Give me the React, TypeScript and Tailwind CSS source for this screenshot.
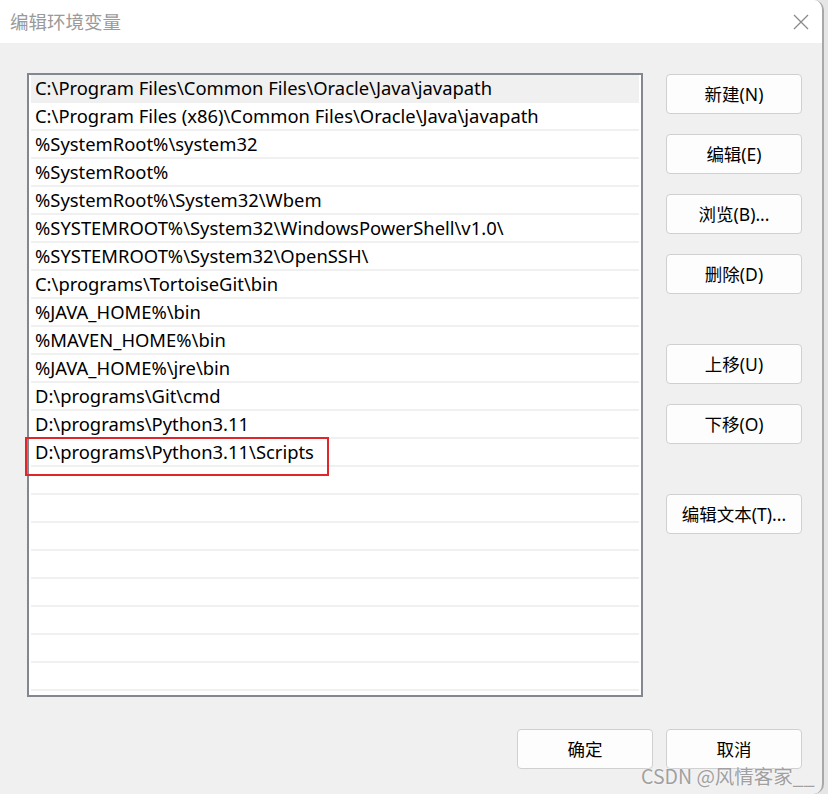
import React from "react";

const rows = [
  "C:\\Program Files\\Common Files\\Oracle\\Java\\javapath",
  "C:\\Program Files (x86)\\Common Files\\Oracle\\Java\\javapath",
  "%SystemRoot%\\system32",
  "%SystemRoot%",
  "%SystemRoot%\\System32\\Wbem",
  "%SYSTEMROOT%\\System32\\WindowsPowerShell\\v1.0\\",
  "%SYSTEMROOT%\\System32\\OpenSSH\\",
  "C:\\programs\\TortoiseGit\\bin",
  "%JAVA_HOME%\\bin",
  "%MAVEN_HOME%\\bin",
  "%JAVA_HOME%\\jre\\bin",
  "D:\\programs\\Git\\cmd",
  "D:\\programs\\Python3.11",
  "D:\\programs\\Python3.11\\Scripts",
];

const FONT = { fontFamily: '"Noto Sans", "Noto Sans CJK SC", sans-serif' };

function Btn({ label, className = "" }: { label: string; className?: string }) {
  return (
    <div
      className={
        "w-[136px] h-[40px] flex items-center justify-center rounded-[4px] border border-[#d0d0d0] bg-[#fdfdfd] text-[17.5px] text-black " +
        className
      }
    >
      {label}
    </div>
  );
}

export default function App() {
  const empty = Array.from({ length: 8 });
  return (
    <div className="w-[828px] h-[794px] bg-[#e6e6e6] overflow-hidden relative" style={FONT}>
      <div className="w-[824px] h-[794px] bg-[#f0f0f0] rounded-tr-[10px] rounded-br-[10px] border-r-2 border-[#a8a8a8] flex flex-col overflow-hidden">
        {/* title bar */}
        <div className="h-[43px] bg-white flex items-center justify-between pl-[10px] pr-[12px] shrink-0">
          <span className="text-[18.5px] text-[#9a9a9a]" style={{ fontFamily: '"Noto Sans CJK SC", sans-serif' }}>
            编辑环境变量
          </span>
          <svg width="18" height="18" viewBox="0 0 18 18">
            <path d="M2 2 L16 16 M16 2 L2 16" stroke="#8a8a8a" strokeWidth="1.3" />
          </svg>
        </div>
        {/* body */}
        <div className="flex pl-[27px] pt-[30px]">
          <div className="relative">
            <div className="w-[616px] h-[624px] border-2 border-[#828790] bg-white overflow-hidden pl-[2px] pr-[2px]">
              {rows.map((r, i) => (
                <div
                  key={i}
                  className={
                    "h-[28px] border-b-2 border-[#f0f0f0] flex items-center pl-[4px] text-[18.4px] text-black whitespace-nowrap " +
                    (i === 0 ? "bg-[#f0f0f0]" : "")
                  }
                >
                  {r}
                </div>
              ))}
              {empty.map((_, i) => (
                <div key={"e" + i} className="h-[28px] border-b-2 border-[#f0f0f0]" />
              ))}
            </div>
            <div className="absolute left-[-2px] top-[364px] w-[304px] h-[39px] border-2 border-[#e0252b]" />
          </div>
          <div className="ml-[23px] mt-[1px] flex flex-col">
            <Btn label="新建(N)" />
            <Btn label="编辑(E)" className="mt-[20px]" />
            <Btn label="浏览(B)..." className="mt-[20px]" />
            <Btn label="删除(D)" className="mt-[20px]" />
            <Btn label="上移(U)" className="mt-[50px]" />
            <Btn label="下移(O)" className="mt-[20px]" />
            <Btn label="编辑文本(T)..." className="mt-[50px]" />
          </div>
        </div>
        <div className="flex justify-end gap-[13px] pr-[20px] mt-[32px]">
          <Btn label="确定" />
          <Btn label="取消" />
        </div>
      </div>
      <div
        className="absolute left-[641px] top-[761px] text-[19.5px] text-[#a0a0a0] whitespace-nowrap"
        style={{ fontFamily: '"Noto Sans CJK SC", sans-serif', textShadow: "0 0 2px #ffffff" }}
      >
        CSDN @风情客家__
      </div>
    </div>
  );
}
